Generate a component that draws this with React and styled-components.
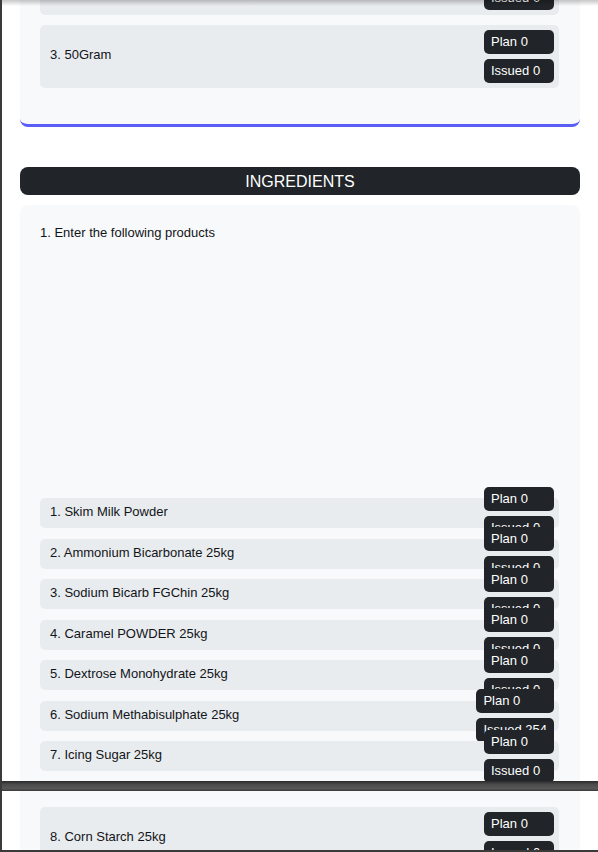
import React from 'react';
import styled, { createGlobalStyle } from 'styled-components';

const GlobalStyle = createGlobalStyle`
  html, body {
    margin: 0;
    padding: 0;
    background: #ffffff;
  }
  body {
    font-family: "Liberation Sans", Arial, sans-serif;
    font-size: 13px;
    color: #111418;
  }
`;

const Viewer = styled.div`
  height: 852px;
  overflow: hidden;
  border-left: 2px solid #3a3a3a;
  display: flex;
  flex-direction: column;
`;

// a printed sheet, cut to the part that is in view
const Sheet = styled.div`
  position: relative;
  flex-shrink: 0;
  height: ${(props) => props.$height}px;
  overflow: hidden;
  padding: 0 18px;
  display: flex;
  flex-direction: column;
  justify-content: ${(props) => (props.$alignEnd ? 'flex-end' : 'flex-start')};

  &::after {
    content: '';
    display: ${(props) => (props.$shadow ? 'block' : 'none')};
    position: absolute;
    top: 0;
    left: 0;
    right: 0;
    height: 6px;
    background: linear-gradient(rgba(0, 0, 0, 0.22), rgba(0, 0, 0, 0));
  }
`;

const PageBreak = styled.div`
  flex-shrink: 0;
  height: 10px;
  background: linear-gradient(#2a2a2a, #4b4b4b 35%, #575757 75%, #3a3a3a);
`;

const PageEdge = styled.div`
  flex-shrink: 0;
  height: 2px;
  background: #3a3a3a;
`;

const Card = styled.div`
  flex-shrink: 0;
  background: #f8f9fa;
  border-radius: ${(props) => props.$radius || '8px'};
  border-bottom: ${(props) => (props.$accent ? '3px solid #5b5ef6' : 'none')};
  padding: ${(props) => props.$padding || '20px 21px 20px 20px'};
`;

const RowList = styled.div`
  display: flex;
  flex-direction: column;
  gap: ${(props) => props.$gap || '10px'};
  margin-top: ${(props) => props.$top || '0'};
`;

const Row = styled.div`
  display: flex;
  align-items: center;
  justify-content: space-between;
  background: #e9ecef;
  border-radius: 5px;
  padding: ${(props) => (props.$compact ? '0 5px 0 10px' : '5px 5px 5px 10px')};
  height: ${(props) => (props.$compact ? '30px' : 'auto')};
`;

const RowLabel = styled.span`
  font-size: 13px;
  line-height: 16px;
  padding-bottom: ${(props) => props.$lift}px;
`;

const BadgeStack = styled.div`
  flex-shrink: 0;
  display: flex;
  flex-direction: column;
  align-items: stretch;
  gap: 5px;
`;

const Badge = styled.div`
  min-width: 70px;
  box-sizing: border-box;
  height: 24px;
  line-height: 24px;
  padding: 0 7px;
  border-radius: 5px;
  background: #212529;
  color: #ffffff;
  font-size: 13px;
  white-space: nowrap;
`;

const SectionHeader = styled.div`
  flex-shrink: 0;
  margin: 40px 0 10px;
  height: 28px;
  line-height: 29px;
  border-radius: 8px;
  background: #212529;
  color: #ffffff;
  font-size: 16px;
  text-align: center;
  overflow: hidden;
`;

const StepText = styled.div`
  font-size: 13px;
  line-height: 16px;
`;

// picture area of the step; nothing drawn in it
const StepPicture = styled.div`
  height: 247px;
`;

const packaging = [
  { name: '1. 25Gram', plan: 0, issued: 0 },
  { name: '2. 35Gram', plan: 0, issued: 0 },
  { name: '3. 50Gram', plan: 0, issued: 0 },
];

const ingredients = [
  { name: 'Skim Milk Powder', plan: 0, issued: 0 },
  { name: 'Ammonium Bicarbonate 25kg', plan: 0, issued: 0 },
  { name: 'Sodium Bicarb FGChin 25kg', plan: 0, issued: 0 },
  { name: 'Caramel POWDER 25kg', plan: 0, issued: 0 },
  { name: 'Dextrose Monohydrate 25kg', plan: 0, issued: 0 },
  { name: 'Sodium Methabisulphate 25kg', plan: 0, issued: 254 },
  { name: 'Icing Sugar 25kg', plan: 0, issued: 0 },
  { name: 'Corn Starch 25kg', plan: 0, issued: 0 },
];

const Item = ({ label, plan, issued, compact, lift = 2 }) => (
  <Row $compact={compact}>
    <RowLabel $lift={lift}>{label}</RowLabel>
    <BadgeStack>
      <Badge>Plan {plan}</Badge>
      <Badge>Issued {issued}</Badge>
    </BadgeStack>
  </Row>
);

const App = () => {
  const firstPage = ingredients.slice(0, 7);
  const secondPage = ingredients.slice(7);

  return (
    <>
      <GlobalStyle />
      <Viewer>
        <Sheet $height={781} $alignEnd $shadow>
          <Card $accent $padding='20px 21px 36px 20px'>
            <RowList>
              {packaging.map((p) => (
                <Item key={p.name} label={p.name} plan={p.plan} issued={p.issued} lift={4} />
              ))}
            </RowList>
          </Card>

          <SectionHeader>INGREDIENTS</SectionHeader>

          <Card $radius='8px 8px 0 0' $padding='20px 21px 10px 20px'>
            <StepText>1. Enter the following products</StepText>
            <StepPicture />
            <RowList $gap='10.5px' $top='10px'>
              {firstPage.map((item, i) => (
                <Item
                  key={item.name}
                  label={`${i + 1}. ${item.name}`}
                  plan={item.plan}
                  issued={item.issued}
                  compact
                />
              ))}
            </RowList>
          </Card>
        </Sheet>

        <PageBreak />

        <Sheet $height={59}>
          <Card $radius='0' $padding='16px 21px 0 20px'>
            <RowList>
              {secondPage.map((item, i) => (
                <Item
                  key={item.name}
                  label={`${i + 8}. ${item.name}`}
                  plan={item.plan}
                  issued={item.issued}
                  lift={3}
                />
              ))}
            </RowList>
          </Card>
        </Sheet>

        <PageEdge />
      </Viewer>
    </>
  );
};

export default App;
